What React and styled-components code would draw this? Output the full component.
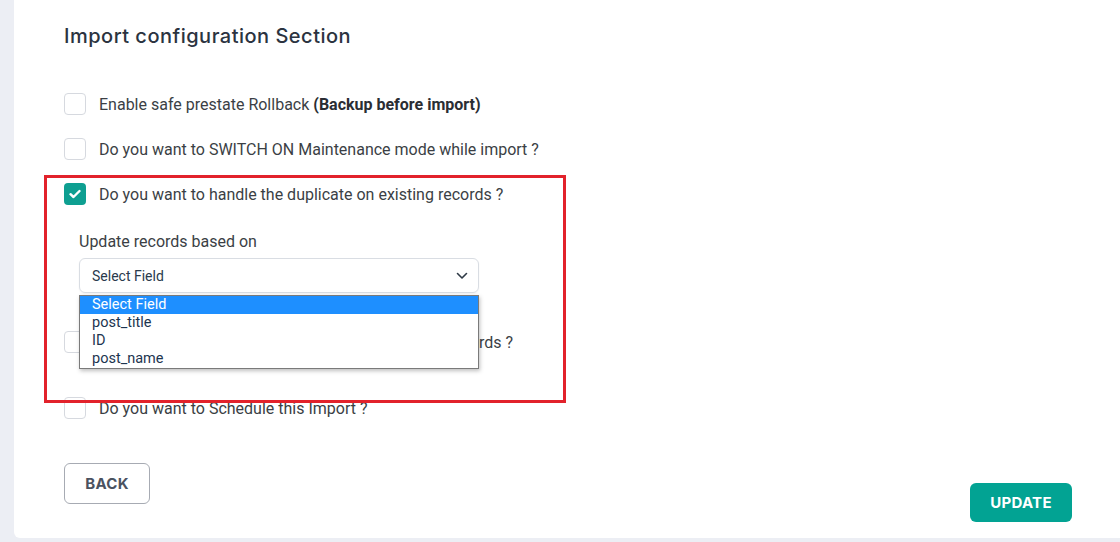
import React from 'react';
import styled, { createGlobalStyle } from 'styled-components';

const GlobalStyle = createGlobalStyle`
  body {
    margin: 0;
    background: #eceef4;
    font-family: Roboto, "Liberation Sans", sans-serif;
  }
`;

const Page = styled.div`
  padding-left: 14px;
  height: 542px;
  box-sizing: border-box;
`;

const Card = styled.div`
  position: relative;
  background: #fff;
  height: 538px;
  border-bottom-left-radius: 6px;
  padding: 24px 48px 0 50px;
  box-sizing: border-box;
`;

const Title = styled.h2`
  margin: 0;
  font-family: Inter, "Open Sans", sans-serif;
  font-weight: 500;
  font-size: 20px;
  letter-spacing: 0.5px;
  line-height: 24px;
  color: #2b3340;
`;

const Row = styled.label`
  display: flex;
  align-items: center;
  gap: 13px;
  height: 22px;
  margin-top: ${(p) => p.top}px;
  font-size: 16px;
  color: #3b3f45;
  & b {
    font-weight: 700;
    color: #2a2d33;
  }
`;

const Box = styled.span`
  width: 22px;
  height: 22px;
  box-sizing: border-box;
  border-radius: 4px;
  flex-shrink: 0;
  display: flex;
  align-items: center;
  justify-content: center;
  border: ${(p) => (p.checked ? 'none' : '1px solid #d6d9df')};
  background: ${(p) => (p.checked ? '#0e9f91' : '#fff')};
`;

const SubField = styled.div`
  padding-left: 15px;
  margin-top: 27px;
`;

const FieldLabel = styled.div`
  font-size: 16px;
  line-height: 20px;
  color: #3b3f45;
`;

const SelectWrap = styled.div`
  position: relative;
  width: 400px;
  margin-top: 6px;
`;

const SelectBox = styled.div`
  height: 35px;
  box-sizing: border-box;
  border: 1px solid #d9dde3;
  border-radius: 6px;
  display: flex;
  align-items: center;
  justify-content: space-between;
  padding: 0 10px 0 12px;
  font-size: 14px;
  color: #2a3a4c;
  box-shadow: 0 1px 2px rgba(0, 0, 0, 0.05);
`;

const OptionList = styled.ul`
  position: absolute;
  top: 37px;
  left: 0;
  width: 400px;
  margin: 0;
  padding: 0;
  list-style: none;
  background: #fff;
  border: 1px solid #7a7a7a;
  box-sizing: border-box;
  box-shadow: 1px 2px 4px rgba(0, 0, 0, 0.25);
  z-index: 2;
`;

const Option = styled.li`
  height: 18px;
  line-height: 18px;
  padding-left: 12px;
  font-size: 14.5px;
  color: ${(p) => (p.active ? '#fff' : '#1d3550')};
  background: ${(p) => (p.active ? '#1e8fff' : 'transparent')};
`;

const Highlight = styled.div`
  position: absolute;
  left: 30px;
  top: 175px;
  width: 522px;
  height: 228px;
  border: 3px solid #e2222b;
  box-sizing: border-box;
  pointer-events: none;
`;

const Footer = styled.div`
  display: flex;
  justify-content: space-between;
  align-items: flex-start;
  margin-top: 44px;
`;

const Button = styled.button`
  font-family: Inter, "Open Sans", sans-serif;
  font-weight: 700;
  font-size: 15px;
  letter-spacing: 0.3px;
  border-radius: 6px;
  cursor: pointer;
  box-sizing: border-box;
  height: ${(p) => (p.primary ? 39 : 41)}px;
  width: ${(p) => (p.primary ? 102 : 86)}px;
  margin-top: ${(p) => (p.primary ? 20 : 0)}px;
  color: ${(p) => (p.primary ? '#fff' : '#4a5260')};
  background: ${(p) => (p.primary ? '#02a393' : '#fff')};
  border: ${(p) => (p.primary ? 'none' : '1px solid #a7abb3')};
`;

const Check = () => (
  <svg width="12" height="10" viewBox="0 0 12 10">
    <polyline points="1.5,5.2 4.5,8 10.5,2" fill="none" stroke="#fff" strokeWidth="2.4" strokeLinecap="round" strokeLinejoin="round" />
  </svg>
);

const Chevron = () => (
  <svg width="12" height="8" viewBox="0 0 12 8">
    <polyline points="1.5,1.5 6,6 10.5,1.5" fill="none" stroke="#2f3a46" strokeWidth="1.6" strokeLinecap="round" strokeLinejoin="round" />
  </svg>
);

const options = ['Select Field', 'post_title', 'ID', 'post_name'];

export default function App() {
  return (
    <Page>
      <GlobalStyle />
      <Card>
        <Title>Import configuration Section</Title>
        <Row top={45}>
          <Box />
          <span>Enable safe prestate Rollback <b>(Backup before import)</b></span>
        </Row>
        <Row top={23}>
          <Box />
          <span>Do you want to SWITCH ON Maintenance mode while import ?</span>
        </Row>
        <Row top={23}>
          <Box checked><Check /></Box>
          <span>Do you want to handle the duplicate on existing records ?</span>
        </Row>
        <SubField>
          <FieldLabel>Update records based on</FieldLabel>
          <SelectWrap>
            <SelectBox>
              <span>Select Field</span>
              <Chevron />
            </SelectBox>
            <OptionList>
              {options.map((o, i) => (
                <Option key={o} active={i === 0}>{o}</Option>
              ))}
            </OptionList>
          </SelectWrap>
        </SubField>
        <Row top={38}>
          <Box />
          <span>Do you want to update the duplicates on existing records ?</span>
        </Row>
        <Row top={44}>
          <Box />
          <span>Do you want to Schedule this Import ?</span>
        </Row>
        <Footer>
          <Button>BACK</Button>
          <Button primary>UPDATE</Button>
        </Footer>
        <Highlight />
      </Card>
    </Page>
  );
}
